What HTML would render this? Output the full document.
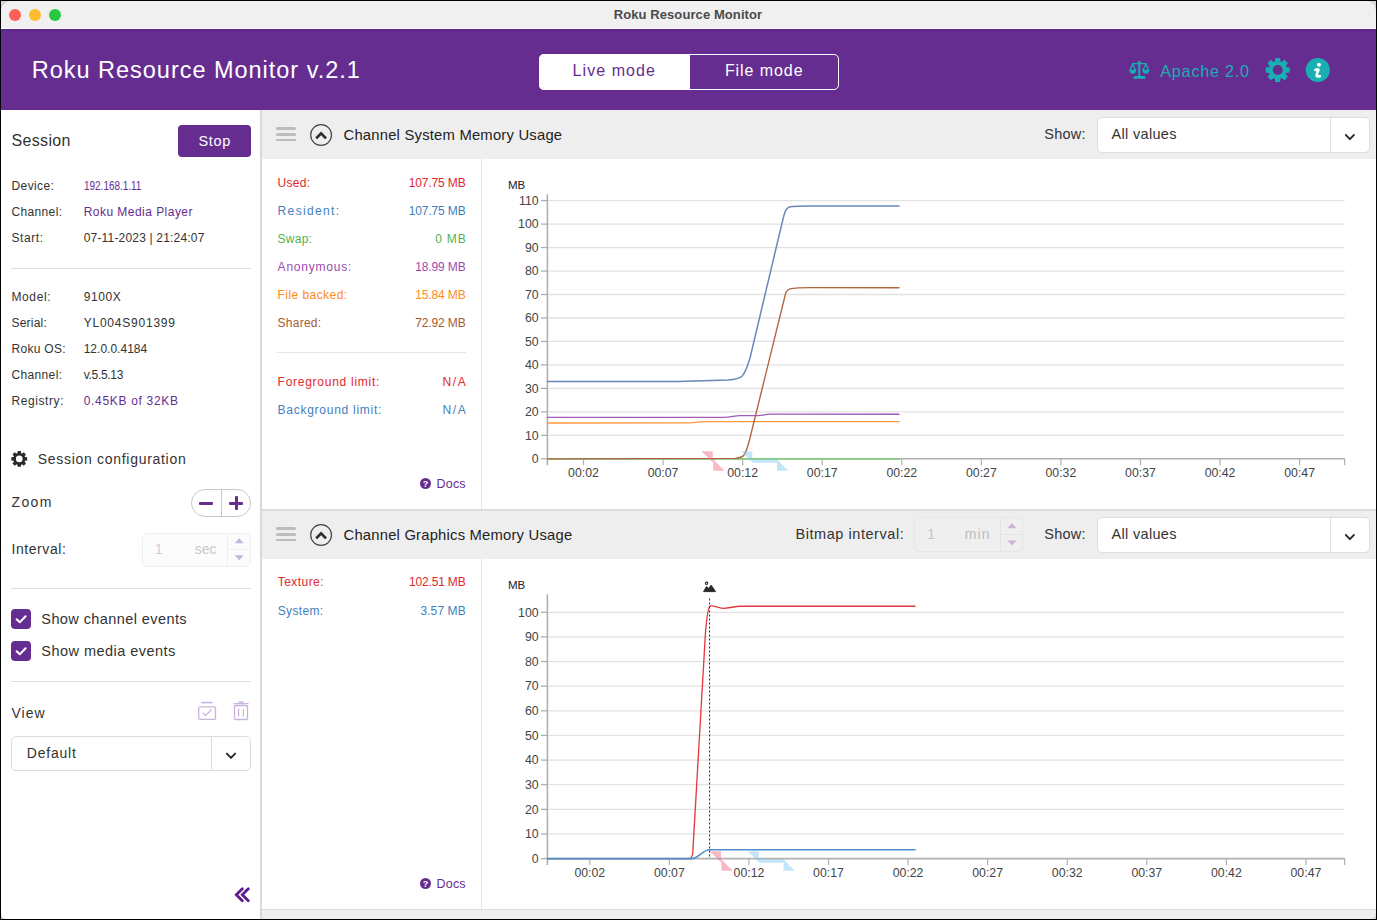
<!DOCTYPE html>
<html><head><meta charset="utf-8">
<style>
*{box-sizing:border-box;margin:0;padding:0}
html,body{width:1377px;height:920px;overflow:hidden;background:#fff;font-family:"Liberation Sans",sans-serif}
.tx{position:absolute;white-space:nowrap;line-height:1;font-family:"Liberation Sans",sans-serif}
.bx{position:absolute}
.ov{position:absolute;left:0;top:0}
</style></head><body>
<div class="bx" style="left:0px;top:0px;width:1377px;height:28px;background:#f0f0f0"></div>
<div class="bx" style="left:0px;top:28px;width:1377px;height:1px;background:#fafafa"></div>
<div class="bx" style="left:9px;top:9px;width:12px;height:12px;background:#fe5f57;border-radius:50%"></div>
<div class="bx" style="left:29px;top:9px;width:12px;height:12px;background:#febc2e;border-radius:50%"></div>
<div class="bx" style="left:49px;top:9px;width:12px;height:12px;background:#28c840;border-radius:50%"></div>
<div class="tx" style="left:613.70px;top:8.20px;font-size:13px;color:#4a4a4a;letter-spacing:0.089px;font-weight:bold;">Roku Resource Monitor</div>
<div class="bx" style="left:0px;top:29px;width:1377px;height:81px;background:#662d91"></div>
<div class="bx" style="left:0px;top:29.5px;width:1377px;height:1.2px;background:#5c2388"></div>
<div class="tx" style="left:31.80px;top:58.91px;font-size:23.5px;color:#ffffff;letter-spacing:0.977px;">Roku Resource Monitor v.2.1</div>
<div class="bx" style="left:538.5px;top:53.5px;width:300.5px;height:36.5px;background:transparent;border:1.5px solid #fff;border-radius:5px"></div>
<div class="bx" style="left:538.5px;top:53.5px;width:151.5px;height:36.5px;background:#fff;border-radius:5px 0 0 5px"></div>
<div class="tx" style="left:572.60px;top:62.86px;font-size:16px;color:#662d91;letter-spacing:1.060px;">Live mode</div>
<div class="tx" style="left:724.90px;top:62.86px;font-size:16px;color:#ffffff;letter-spacing:0.931px;">File mode</div>
<div class="tx" style="left:1160.30px;top:62.69px;font-size:16.2px;color:#18afb3;letter-spacing:0.759px;">Apache 2.0</div>
<div class="bx" style="left:0px;top:110px;width:260px;height:810px;background:#fff"></div>
<div class="bx" style="left:260px;top:110px;width:2px;height:810px;background:#d9d9d9"></div>
<div class="tx" style="left:11.50px;top:132.96px;font-size:16px;color:#333333;letter-spacing:0.346px;">Session</div>
<div class="bx" style="left:178px;top:125px;width:73px;height:32px;background:#662d91;border-radius:4px"></div>
<div class="tx" style="left:198.40px;top:133.53px;font-size:14.5px;color:#fff;letter-spacing:0.724px;">Stop</div>
<div class="tx" style="left:11.50px;top:179.74px;font-size:12px;color:#333333;letter-spacing:0.398px;">Device:</div>
<div class="tx" style="left:83.70px;top:179.74px;font-size:12px;color:#662d91;transform:scaleX(0.8298);transform-origin:0 0;">192.168.1.11</div>
<div class="tx" style="left:11.50px;top:205.74px;font-size:12px;color:#333333;letter-spacing:0.352px;">Channel:</div>
<div class="tx" style="left:83.70px;top:205.74px;font-size:12px;color:#662d91;letter-spacing:0.464px;">Roku Media Player</div>
<div class="tx" style="left:11.50px;top:231.74px;font-size:12px;color:#333333;letter-spacing:0.565px;">Start:</div>
<div class="tx" style="left:83.70px;top:231.74px;font-size:12px;color:#333333;letter-spacing:0.185px;">07-11-2023 | 21:24:07</div>
<div class="bx" style="left:11px;top:267.5px;width:240px;height:1.2px;background:#dedede"></div>
<div class="tx" style="left:11.50px;top:290.84px;font-size:12px;color:#333333;letter-spacing:0.596px;">Model:</div>
<div class="tx" style="left:83.70px;top:290.84px;font-size:12px;color:#333333;letter-spacing:0.575px;">9100X</div>
<div class="tx" style="left:11.50px;top:316.79px;font-size:12px;color:#333333;letter-spacing:0.214px;">Serial:</div>
<div class="tx" style="left:83.70px;top:316.79px;font-size:12px;color:#333333;letter-spacing:0.777px;">YL004S901399</div>
<div class="tx" style="left:11.50px;top:342.74px;font-size:12px;color:#333333;letter-spacing:0.283px;">Roku OS:</div>
<div class="tx" style="left:83.70px;top:342.74px;font-size:12px;color:#333333;letter-spacing:0.011px;">12.0.0.4184</div>
<div class="tx" style="left:11.50px;top:368.69px;font-size:12px;color:#333333;letter-spacing:0.352px;">Channel:</div>
<div class="tx" style="left:83.70px;top:368.69px;font-size:12px;color:#333333;letter-spacing:-0.301px;">v.5.5.13</div>
<div class="tx" style="left:11.50px;top:394.64px;font-size:12px;color:#333333;letter-spacing:0.582px;">Registry:</div>
<div class="tx" style="left:83.70px;top:394.64px;font-size:12px;color:#662d91;letter-spacing:0.685px;">0.45KB of 32KB</div>
<div class="tx" style="left:37.70px;top:452.15px;font-size:14px;color:#333333;letter-spacing:0.707px;">Session configuration</div>
<div class="tx" style="left:11.50px;top:495.35px;font-size:14px;color:#333333;letter-spacing:1.337px;">Zoom</div>
<div class="bx" style="left:191px;top:489px;width:60px;height:27.5px;border:1px solid #c8c8c8;border-radius:14px;background:#fff"></div>
<div class="bx" style="left:220.5px;top:489.5px;width:1.3px;height:26.5px;background:#c8c8c8"></div>
<div class="bx" style="left:199.3px;top:501.5px;width:13.6px;height:3px;background:#662d91;border-radius:1px"></div>
<div class="bx" style="left:229.2px;top:501.5px;width:13.6px;height:3px;background:#662d91;border-radius:1px"></div>
<div class="bx" style="left:234.5px;top:496.3px;width:3px;height:13.6px;background:#662d91;border-radius:1px"></div>
<div class="tx" style="left:11.50px;top:542.15px;font-size:14px;color:#333333;letter-spacing:0.562px;">Interval:</div>
<div class="bx" style="left:142px;top:532.6px;width:108.5px;height:34.5px;border:1px solid #efefef;border-radius:5px;background:#fcfcfc"></div>
<div class="bx" style="left:227px;top:533px;width:1px;height:33.5px;background:#efefef"></div>
<div class="bx" style="left:227.5px;top:549.3px;width:22.5px;height:1px;background:#efefef"></div>
<div class="tx" style="left:154.80px;top:542.15px;font-size:14px;color:#cfcfcf;">1</div>
<div class="tx" style="left:194.70px;top:542.15px;font-size:14px;color:#c8c8c8;letter-spacing:0.007px;">sec</div>
<div class="bx" style="left:0px;top:0px;width:0px;height:0px;"></div>
<div class="bx" style="left:11px;top:588px;width:240px;height:1.2px;background:#dedede"></div>
<div class="bx" style="left:11.4px;top:609px;width:20px;height:20px;background:#662d91;border-radius:4px"></div>
<div class="tx" style="left:41.30px;top:612.13px;font-size:14.5px;color:#333333;letter-spacing:0.414px;">Show channel events</div>
<div class="bx" style="left:11.4px;top:641px;width:20px;height:20px;background:#662d91;border-radius:4px"></div>
<div class="tx" style="left:41.30px;top:644.13px;font-size:14.5px;color:#333333;letter-spacing:0.466px;">Show media events</div>
<div class="bx" style="left:11px;top:680.7px;width:240px;height:1.2px;background:#dedede"></div>
<div class="tx" style="left:11.50px;top:706.25px;font-size:14px;color:#333333;letter-spacing:0.969px;">View</div>
<div class="bx" style="left:11.4px;top:736.3px;width:239.2px;height:35px;border:1px solid #dcdcdc;border-radius:5px;background:#fff"></div>
<div class="bx" style="left:211px;top:736.8px;width:1px;height:34px;background:#dcdcdc"></div>
<div class="tx" style="left:26.80px;top:746.35px;font-size:14px;color:#333333;letter-spacing:0.773px;">Default</div>
<div class="bx" style="left:262px;top:110px;width:1115px;height:810px;background:#fff"></div>
<div class="bx" style="left:262px;top:110px;width:1115px;height:48.5px;background:#eeeeee"></div>
<div class="bx" style="left:262px;top:509px;width:1115px;height:1.5px;background:#dcdcdc"></div>
<div class="bx" style="left:262px;top:510.5px;width:1115px;height:48px;background:#eeeeee"></div>
<div class="bx" style="left:262px;top:908.5px;width:1115px;height:1.5px;background:#dcdcdc"></div>
<div class="bx" style="left:262px;top:910px;width:1115px;height:10px;background:#eeeeee"></div>
<div class="bx" style="left:481px;top:158.5px;width:1px;height:350.5px;background:#e3e3e3"></div>
<div class="bx" style="left:481px;top:558.5px;width:1px;height:350px;background:#e3e3e3"></div>
<div class="bx" style="left:276.2px;top:127.1px;width:20px;height:2.8px;background:#bdbdbd;border-radius:1.5px"></div>
<div class="bx" style="left:276.2px;top:132.79999999999998px;width:20px;height:2.8px;background:#bdbdbd;border-radius:1.5px"></div>
<div class="bx" style="left:276.2px;top:138.5px;width:20px;height:2.8px;background:#bdbdbd;border-radius:1.5px"></div>
<div class="bx" style="left:276.2px;top:527.1px;width:20px;height:2.8px;background:#bdbdbd;border-radius:1.5px"></div>
<div class="bx" style="left:276.2px;top:532.8px;width:20px;height:2.8px;background:#bdbdbd;border-radius:1.5px"></div>
<div class="bx" style="left:276.2px;top:538.5px;width:20px;height:2.8px;background:#bdbdbd;border-radius:1.5px"></div>
<div class="tx" style="left:343.50px;top:128.07px;font-size:14.8px;color:#222;letter-spacing:0.214px;">Channel System Memory Usage</div>
<div class="tx" style="left:343.50px;top:527.77px;font-size:14.8px;color:#222;letter-spacing:0.206px;">Channel Graphics Memory Usage</div>
<div class="tx" style="left:1044.30px;top:127.03px;font-size:14.5px;color:#333333;letter-spacing:0.225px;">Show:</div>
<div class="bx" style="left:1096.5px;top:117px;width:273.5px;height:35.5px;border:1px solid #dedede;border-radius:5px;background:#fff"></div>
<div class="bx" style="left:1330px;top:117.5px;width:1px;height:34.5px;background:#dedede"></div>
<div class="tx" style="left:1111.60px;top:127.03px;font-size:14.5px;color:#333333;letter-spacing:0.316px;">All values</div>
<div class="tx" style="left:1044.30px;top:527.03px;font-size:14.5px;color:#333333;letter-spacing:0.225px;">Show:</div>
<div class="bx" style="left:1096.5px;top:517px;width:273.5px;height:35.5px;border:1px solid #dedede;border-radius:5px;background:#fff"></div>
<div class="bx" style="left:1330px;top:517.5px;width:1px;height:34.5px;background:#dedede"></div>
<div class="tx" style="left:1111.60px;top:527.03px;font-size:14.5px;color:#333333;letter-spacing:0.316px;">All values</div>
<div class="tx" style="left:795.50px;top:526.73px;font-size:14.5px;color:#333333;letter-spacing:0.551px;">Bitmap interval:</div>
<div class="bx" style="left:914.4px;top:517.3px;width:108.8px;height:35px;border:1px solid #e6e6e6;border-radius:5px;background:#efefef"></div>
<div class="bx" style="left:1000.3px;top:517.8px;width:1px;height:34px;background:#e4e4e4"></div>
<div class="bx" style="left:1000.8px;top:534.2px;width:22px;height:1px;background:#e4e4e4"></div>
<div class="tx" style="left:927.30px;top:527.15px;font-size:14px;color:#c4c4c4;">1</div>
<div class="tx" style="left:964.70px;top:527.15px;font-size:14px;color:#bdbdbd;letter-spacing:1.170px;">min</div>
<div class="tx" style="left:277.60px;top:176.84px;font-size:12px;color:#e2272d;letter-spacing:0.263px;">Used:</div>
<div class="tx" style="left:408.80px;top:176.84px;font-size:12px;color:#e2272d;letter-spacing:-0.142px;">107.75 MB</div>
<div class="tx" style="left:277.60px;top:204.89px;font-size:12px;color:#3f80c0;letter-spacing:1.350px;">Resident:</div>
<div class="tx" style="left:408.80px;top:204.89px;font-size:12px;color:#3f80c0;letter-spacing:-0.142px;">107.75 MB</div>
<div class="tx" style="left:277.60px;top:232.94px;font-size:12px;color:#55b04f;letter-spacing:0.237px;">Swap:</div>
<div class="tx" style="left:435.20px;top:232.94px;font-size:12px;color:#55b04f;letter-spacing:0.830px;">0 MB</div>
<div class="tx" style="left:277.60px;top:260.99px;font-size:12px;color:#9b4cb3;letter-spacing:0.788px;">Anonymous:</div>
<div class="tx" style="left:415.20px;top:260.99px;font-size:12px;color:#9b4cb3;letter-spacing:-0.124px;">18.99 MB</div>
<div class="tx" style="left:277.60px;top:289.04px;font-size:12px;color:#ff8a1e;letter-spacing:0.436px;">File backed:</div>
<div class="tx" style="left:415.20px;top:289.04px;font-size:12px;color:#ff8a1e;letter-spacing:-0.124px;">15.84 MB</div>
<div class="tx" style="left:277.60px;top:317.09px;font-size:12px;color:#a75a33;letter-spacing:0.245px;">Shared:</div>
<div class="tx" style="left:415.20px;top:317.09px;font-size:12px;color:#a75a33;letter-spacing:-0.124px;">72.92 MB</div>
<div class="bx" style="left:277px;top:351.8px;width:189px;height:1.2px;background:#e6e6e6"></div>
<div class="tx" style="left:277.60px;top:375.84px;font-size:12px;color:#e2272d;letter-spacing:0.735px;">Foreground limit:</div>
<div class="tx" style="left:442.40px;top:375.84px;font-size:12px;color:#e2272d;letter-spacing:1.648px;">N/A</div>
<div class="tx" style="left:277.60px;top:403.84px;font-size:12px;color:#3f80c0;letter-spacing:0.735px;">Background limit:</div>
<div class="tx" style="left:442.40px;top:403.84px;font-size:12px;color:#3f80c0;letter-spacing:1.648px;">N/A</div>
<div class="tx" style="left:277.70px;top:576.34px;font-size:12px;color:#e2272d;letter-spacing:0.459px;">Texture:</div>
<div class="tx" style="left:408.90px;top:576.34px;font-size:12px;color:#e2272d;letter-spacing:-0.155px;">102.51 MB</div>
<div class="tx" style="left:277.70px;top:604.54px;font-size:12px;color:#3f80c0;letter-spacing:0.360px;">System:</div>
<div class="tx" style="left:420.40px;top:604.54px;font-size:12px;color:#3f80c0;letter-spacing:0.102px;">3.57 MB</div>
<div class="bx" style="left:420px;top:477.5px;width:11px;height:11px;background:#662d91;border-radius:50%"></div>
<div class="tx" style="left:436.50px;top:478.32px;font-size:12.5px;color:#662d91;letter-spacing:0.207px;">Docs</div>
<div class="bx" style="left:420px;top:877.5px;width:11px;height:11px;background:#662d91;border-radius:50%"></div>
<div class="tx" style="left:436.50px;top:878.32px;font-size:12.5px;color:#662d91;letter-spacing:0.207px;">Docs</div>
<svg class="ov" width="1377" height="920" viewBox="0 0 1377 920" font-family="Liberation Sans, sans-serif"><line x1="540.9" y1="458.80" x2="547.4" y2="458.80" stroke="#aaaaaa" stroke-width="1.2"/><text x="538.6" y="463.10" text-anchor="end" font-size="12.3" fill="#444">0</text><line x1="547.4" y1="435.33" x2="1344.7" y2="435.33" stroke="#e2e2e2" stroke-width="1.3"/><line x1="540.9" y1="435.33" x2="547.4" y2="435.33" stroke="#aaaaaa" stroke-width="1.2"/><text x="538.6" y="439.63" text-anchor="end" font-size="12.3" fill="#444">10</text><line x1="547.4" y1="411.86" x2="1344.7" y2="411.86" stroke="#e2e2e2" stroke-width="1.3"/><line x1="540.9" y1="411.86" x2="547.4" y2="411.86" stroke="#aaaaaa" stroke-width="1.2"/><text x="538.6" y="416.16" text-anchor="end" font-size="12.3" fill="#444">20</text><line x1="547.4" y1="388.39" x2="1344.7" y2="388.39" stroke="#e2e2e2" stroke-width="1.3"/><line x1="540.9" y1="388.39" x2="547.4" y2="388.39" stroke="#aaaaaa" stroke-width="1.2"/><text x="538.6" y="392.69" text-anchor="end" font-size="12.3" fill="#444">30</text><line x1="547.4" y1="364.92" x2="1344.7" y2="364.92" stroke="#e2e2e2" stroke-width="1.3"/><line x1="540.9" y1="364.92" x2="547.4" y2="364.92" stroke="#aaaaaa" stroke-width="1.2"/><text x="538.6" y="369.22" text-anchor="end" font-size="12.3" fill="#444">40</text><line x1="547.4" y1="341.45" x2="1344.7" y2="341.45" stroke="#e2e2e2" stroke-width="1.3"/><line x1="540.9" y1="341.45" x2="547.4" y2="341.45" stroke="#aaaaaa" stroke-width="1.2"/><text x="538.6" y="345.75" text-anchor="end" font-size="12.3" fill="#444">50</text><line x1="547.4" y1="317.98" x2="1344.7" y2="317.98" stroke="#e2e2e2" stroke-width="1.3"/><line x1="540.9" y1="317.98" x2="547.4" y2="317.98" stroke="#aaaaaa" stroke-width="1.2"/><text x="538.6" y="322.28" text-anchor="end" font-size="12.3" fill="#444">60</text><line x1="547.4" y1="294.51" x2="1344.7" y2="294.51" stroke="#e2e2e2" stroke-width="1.3"/><line x1="540.9" y1="294.51" x2="547.4" y2="294.51" stroke="#aaaaaa" stroke-width="1.2"/><text x="538.6" y="298.81" text-anchor="end" font-size="12.3" fill="#444">70</text><line x1="547.4" y1="271.04" x2="1344.7" y2="271.04" stroke="#e2e2e2" stroke-width="1.3"/><line x1="540.9" y1="271.04" x2="547.4" y2="271.04" stroke="#aaaaaa" stroke-width="1.2"/><text x="538.6" y="275.34" text-anchor="end" font-size="12.3" fill="#444">80</text><line x1="547.4" y1="247.57" x2="1344.7" y2="247.57" stroke="#e2e2e2" stroke-width="1.3"/><line x1="540.9" y1="247.57" x2="547.4" y2="247.57" stroke="#aaaaaa" stroke-width="1.2"/><text x="538.6" y="251.87" text-anchor="end" font-size="12.3" fill="#444">90</text><line x1="547.4" y1="224.10" x2="1344.7" y2="224.10" stroke="#e2e2e2" stroke-width="1.3"/><line x1="540.9" y1="224.10" x2="547.4" y2="224.10" stroke="#aaaaaa" stroke-width="1.2"/><text x="538.6" y="228.40" text-anchor="end" font-size="12.3" fill="#444">100</text><line x1="547.4" y1="200.63" x2="1344.7" y2="200.63" stroke="#e2e2e2" stroke-width="1.3"/><line x1="540.9" y1="200.63" x2="547.4" y2="200.63" stroke="#aaaaaa" stroke-width="1.2"/><text x="538.6" y="204.93" text-anchor="end" font-size="12.3" fill="#444">110</text><line x1="547.4" y1="194.3" x2="547.4" y2="465.3" stroke="#b0b0b0" stroke-width="1.6"/><line x1="547.4" y1="458.8" x2="1344.7" y2="458.8" stroke="#b0b0b0" stroke-width="1.6"/><line x1="1344.7" y1="458.8" x2="1344.7" y2="465.3" stroke="#b0b0b0" stroke-width="1.2"/><line x1="583.50" y1="458.8" x2="583.50" y2="465.3" stroke="#b0b0b0" stroke-width="1.2"/><text x="583.50" y="476.8" text-anchor="middle" font-size="12.3" fill="#444">00:02</text><line x1="663.07" y1="458.8" x2="663.07" y2="465.3" stroke="#b0b0b0" stroke-width="1.2"/><text x="663.07" y="476.8" text-anchor="middle" font-size="12.3" fill="#444">00:07</text><line x1="742.64" y1="458.8" x2="742.64" y2="465.3" stroke="#b0b0b0" stroke-width="1.2"/><text x="742.64" y="476.8" text-anchor="middle" font-size="12.3" fill="#444">00:12</text><line x1="822.21" y1="458.8" x2="822.21" y2="465.3" stroke="#b0b0b0" stroke-width="1.2"/><text x="822.21" y="476.8" text-anchor="middle" font-size="12.3" fill="#444">00:17</text><line x1="901.78" y1="458.8" x2="901.78" y2="465.3" stroke="#b0b0b0" stroke-width="1.2"/><text x="901.78" y="476.8" text-anchor="middle" font-size="12.3" fill="#444">00:22</text><line x1="981.35" y1="458.8" x2="981.35" y2="465.3" stroke="#b0b0b0" stroke-width="1.2"/><text x="981.35" y="476.8" text-anchor="middle" font-size="12.3" fill="#444">00:27</text><line x1="1060.92" y1="458.8" x2="1060.92" y2="465.3" stroke="#b0b0b0" stroke-width="1.2"/><text x="1060.92" y="476.8" text-anchor="middle" font-size="12.3" fill="#444">00:32</text><line x1="1140.49" y1="458.8" x2="1140.49" y2="465.3" stroke="#b0b0b0" stroke-width="1.2"/><text x="1140.49" y="476.8" text-anchor="middle" font-size="12.3" fill="#444">00:37</text><line x1="1220.06" y1="458.8" x2="1220.06" y2="465.3" stroke="#b0b0b0" stroke-width="1.2"/><text x="1220.06" y="476.8" text-anchor="middle" font-size="12.3" fill="#444">00:42</text><line x1="1299.63" y1="458.8" x2="1299.63" y2="465.3" stroke="#b0b0b0" stroke-width="1.2"/><text x="1299.63" y="476.8" text-anchor="middle" font-size="12.3" fill="#444">00:47</text><text x="508" y="188.9" font-size="11.5" fill="#222">MB</text><line x1="540.9" y1="858.60" x2="547.4" y2="858.60" stroke="#aaaaaa" stroke-width="1.2"/><text x="538.6" y="862.90" text-anchor="end" font-size="12.3" fill="#444">0</text><line x1="547.4" y1="833.97" x2="1344.7" y2="833.97" stroke="#e2e2e2" stroke-width="1.3"/><line x1="540.9" y1="833.97" x2="547.4" y2="833.97" stroke="#aaaaaa" stroke-width="1.2"/><text x="538.6" y="838.27" text-anchor="end" font-size="12.3" fill="#444">10</text><line x1="547.4" y1="809.34" x2="1344.7" y2="809.34" stroke="#e2e2e2" stroke-width="1.3"/><line x1="540.9" y1="809.34" x2="547.4" y2="809.34" stroke="#aaaaaa" stroke-width="1.2"/><text x="538.6" y="813.64" text-anchor="end" font-size="12.3" fill="#444">20</text><line x1="547.4" y1="784.71" x2="1344.7" y2="784.71" stroke="#e2e2e2" stroke-width="1.3"/><line x1="540.9" y1="784.71" x2="547.4" y2="784.71" stroke="#aaaaaa" stroke-width="1.2"/><text x="538.6" y="789.01" text-anchor="end" font-size="12.3" fill="#444">30</text><line x1="547.4" y1="760.08" x2="1344.7" y2="760.08" stroke="#e2e2e2" stroke-width="1.3"/><line x1="540.9" y1="760.08" x2="547.4" y2="760.08" stroke="#aaaaaa" stroke-width="1.2"/><text x="538.6" y="764.38" text-anchor="end" font-size="12.3" fill="#444">40</text><line x1="547.4" y1="735.45" x2="1344.7" y2="735.45" stroke="#e2e2e2" stroke-width="1.3"/><line x1="540.9" y1="735.45" x2="547.4" y2="735.45" stroke="#aaaaaa" stroke-width="1.2"/><text x="538.6" y="739.75" text-anchor="end" font-size="12.3" fill="#444">50</text><line x1="547.4" y1="710.82" x2="1344.7" y2="710.82" stroke="#e2e2e2" stroke-width="1.3"/><line x1="540.9" y1="710.82" x2="547.4" y2="710.82" stroke="#aaaaaa" stroke-width="1.2"/><text x="538.6" y="715.12" text-anchor="end" font-size="12.3" fill="#444">60</text><line x1="547.4" y1="686.19" x2="1344.7" y2="686.19" stroke="#e2e2e2" stroke-width="1.3"/><line x1="540.9" y1="686.19" x2="547.4" y2="686.19" stroke="#aaaaaa" stroke-width="1.2"/><text x="538.6" y="690.49" text-anchor="end" font-size="12.3" fill="#444">70</text><line x1="547.4" y1="661.56" x2="1344.7" y2="661.56" stroke="#e2e2e2" stroke-width="1.3"/><line x1="540.9" y1="661.56" x2="547.4" y2="661.56" stroke="#aaaaaa" stroke-width="1.2"/><text x="538.6" y="665.86" text-anchor="end" font-size="12.3" fill="#444">80</text><line x1="547.4" y1="636.93" x2="1344.7" y2="636.93" stroke="#e2e2e2" stroke-width="1.3"/><line x1="540.9" y1="636.93" x2="547.4" y2="636.93" stroke="#aaaaaa" stroke-width="1.2"/><text x="538.6" y="641.23" text-anchor="end" font-size="12.3" fill="#444">90</text><line x1="547.4" y1="612.30" x2="1344.7" y2="612.30" stroke="#e2e2e2" stroke-width="1.3"/><line x1="540.9" y1="612.30" x2="547.4" y2="612.30" stroke="#aaaaaa" stroke-width="1.2"/><text x="538.6" y="616.60" text-anchor="end" font-size="12.3" fill="#444">100</text><line x1="547.4" y1="594.3" x2="547.4" y2="865.1" stroke="#b0b0b0" stroke-width="1.6"/><line x1="547.4" y1="858.6" x2="1344.7" y2="858.6" stroke="#b0b0b0" stroke-width="1.6"/><line x1="1344.7" y1="858.6" x2="1344.7" y2="865.1" stroke="#b0b0b0" stroke-width="1.2"/><line x1="589.80" y1="858.6" x2="589.80" y2="865.1" stroke="#b0b0b0" stroke-width="1.2"/><text x="589.80" y="876.8" text-anchor="middle" font-size="12.3" fill="#444">00:02</text><line x1="669.37" y1="858.6" x2="669.37" y2="865.1" stroke="#b0b0b0" stroke-width="1.2"/><text x="669.37" y="876.8" text-anchor="middle" font-size="12.3" fill="#444">00:07</text><line x1="748.94" y1="858.6" x2="748.94" y2="865.1" stroke="#b0b0b0" stroke-width="1.2"/><text x="748.94" y="876.8" text-anchor="middle" font-size="12.3" fill="#444">00:12</text><line x1="828.51" y1="858.6" x2="828.51" y2="865.1" stroke="#b0b0b0" stroke-width="1.2"/><text x="828.51" y="876.8" text-anchor="middle" font-size="12.3" fill="#444">00:17</text><line x1="908.08" y1="858.6" x2="908.08" y2="865.1" stroke="#b0b0b0" stroke-width="1.2"/><text x="908.08" y="876.8" text-anchor="middle" font-size="12.3" fill="#444">00:22</text><line x1="987.65" y1="858.6" x2="987.65" y2="865.1" stroke="#b0b0b0" stroke-width="1.2"/><text x="987.65" y="876.8" text-anchor="middle" font-size="12.3" fill="#444">00:27</text><line x1="1067.22" y1="858.6" x2="1067.22" y2="865.1" stroke="#b0b0b0" stroke-width="1.2"/><text x="1067.22" y="876.8" text-anchor="middle" font-size="12.3" fill="#444">00:32</text><line x1="1146.79" y1="858.6" x2="1146.79" y2="865.1" stroke="#b0b0b0" stroke-width="1.2"/><text x="1146.79" y="876.8" text-anchor="middle" font-size="12.3" fill="#444">00:37</text><line x1="1226.36" y1="858.6" x2="1226.36" y2="865.1" stroke="#b0b0b0" stroke-width="1.2"/><text x="1226.36" y="876.8" text-anchor="middle" font-size="12.3" fill="#444">00:42</text><line x1="1305.93" y1="858.6" x2="1305.93" y2="865.1" stroke="#b0b0b0" stroke-width="1.2"/><text x="1305.93" y="876.8" text-anchor="middle" font-size="12.3" fill="#444">00:47</text><text x="508" y="588.9" font-size="11.5" fill="#222">MB</text><g fill="none" stroke-width="1.35" stroke-linejoin="round" stroke-linecap="round"><path stroke="#86ca86" stroke-width="1.8" d="M547.4,458.8 H899"/><path stroke="#ff9640" d="M547.4,423 L686,422.9 C694,422.8 698,421.8 706,421.7 L899,421.6"/><path stroke="#a05cb6" d="M547.4,417.4 L724,417.4 C730,417.4 735,415.6 740,415.6 L758,415.6 C763,415.6 765,414.3 770,414.2 L899,414.2"/><path stroke="#b0653f" d="M547.4,458.8 L735,458.4 C740,458 742,457.5 744,455 C746,452 747.5,448 749.5,440 L784,300 C785.5,293 786.5,289.5 790,288.8 C795,288 800,287.8 810,287.7 L899,287.7"/><path stroke="#e2272d" stroke-width="0" d="M547.4,381.4 L677,381.4 C700,381 715,380.5 728,380 C735,379.5 740,378 742,376.2 C745,373 747,368 750,358 L783,219 C785,211 786,208 790,206.8 C795,206 800,205.9 810,205.9 L899,205.9"/><path stroke="#6a88bb" stroke-width="1.5" d="M547.4,381.4 L677,381.4 C700,381 715,380.5 728,380 C735,379.5 740,378 742,376.2 C745,373 747,368 750,358 L783,219 C785,211 786,208 790,206.8 C795,206 800,205.9 810,205.9 L899,205.9"/></g><g fill="none" stroke-width="1.35" stroke-linejoin="round" stroke-linecap="round"><path stroke="#e53a40" d="M547.4,858.6 L690.5,858.6 C691.5,858 692,856 692.7,853.9 L705.5,632 C707,615 708,607 710,606 C714,605 718,608.3 723,608.3 C730,608.3 734,606.2 741,606.2 L915,606.2"/><path stroke="#4f8fcc" stroke-width="1.6" d="M547.4,858.6 L692,858.6 C698,858.6 703,849.8 709.6,849.8 L915,849.8"/></g><polygon fill="#f06482" fill-opacity="0.45" points="701.2,451.2 712.8000000000001,451.2 712.8000000000001,459.0 724.7,470.7 713.2,470.7 713.2,462.5"/><polygon fill="#7cc6ee" fill-opacity="0.45" points="741.1,451.2 752.3000000000001,451.2 752.3000000000001,459.2 777.0,459.2 788.2,470.7 777.0,470.7 777.0,462.8 752.7,462.8"/><polygon fill="#f06482" fill-opacity="0.45" points="709.4,851.2 721.0,851.2 721.0,859.0 732.9,870.7 721.4,870.7 721.4,862.5"/><polygon fill="#7cc6ee" fill-opacity="0.45" points="747.6,851.2 758.8000000000001,851.2 758.8000000000001,859.2 783.5,859.2 794.7,870.7 783.5,870.7 783.5,862.8000000000001 759.2,862.8000000000001"/><line x1="709.6" y1="598.5" x2="709.6" y2="858.6" stroke="#222" stroke-width="1" stroke-dasharray="2,2"/><path fill="#2a2a2a" stroke="#2a2a2a" stroke-width="1" stroke-linejoin="round" d="M703.6,591.6 L706.5,586.6 L708.4,588.4 L711.2,585.2 L715.5,591.6 Z"/><circle cx="706.6" cy="583.3" r="1.2" fill="none" stroke="#2a2a2a" stroke-width="1.1"/></svg>
<svg class="ov" width="1377" height="920" viewBox="0 0 1377 920" font-family="Liberation Sans, sans-serif"><path fill="#2b2b2b" d="M24.76,456.99 L27.19,457.32 L27.19,460.48 L24.76,460.81 L24.50,461.45 L25.98,463.40 L23.75,465.63 L21.80,464.15 L21.16,464.41 L20.83,466.84 L17.67,466.84 L17.34,464.41 L16.70,464.15 L14.75,465.63 L12.52,463.40 L14.00,461.45 L13.74,460.81 L11.31,460.48 L11.31,457.32 L13.74,456.99 L14.00,456.35 L12.52,454.40 L14.75,452.17 L16.70,453.65 L17.34,453.39 L17.67,450.96 L20.83,450.96 L21.16,453.39 L21.80,453.65 L23.75,452.17 L25.98,454.40 L24.50,456.35 Z"/><circle cx="19.25" cy="458.9" r="5.832" fill="#2b2b2b"/><circle cx="19.25" cy="458.9" r="3.3209999999999997" fill="#fff"/><path fill="#18afb3" d="M1286.03,67.11 L1289.71,67.61 L1289.71,72.39 L1286.03,72.89 L1285.64,73.85 L1287.89,76.81 L1284.51,80.19 L1281.55,77.94 L1280.59,78.33 L1280.09,82.01 L1275.31,82.01 L1274.81,78.33 L1273.85,77.94 L1270.89,80.19 L1267.51,76.81 L1269.76,73.85 L1269.37,72.89 L1265.69,72.39 L1265.69,67.61 L1269.37,67.11 L1269.76,66.15 L1267.51,63.19 L1270.89,59.81 L1273.85,62.06 L1274.81,61.67 L1275.31,57.99 L1280.09,57.99 L1280.59,61.67 L1281.55,62.06 L1284.51,59.81 L1287.89,63.19 L1285.64,66.15 Z"/><circle cx="1277.7" cy="70" r="8.82" fill="#18afb3"/><circle cx="1277.7" cy="70" r="5.0225" fill="#662d91"/><circle cx="1317.8" cy="70" r="12" fill="#18afb3"/><circle cx="1319" cy="64.8" r="2" fill="#fff"/><path d="M1315.4,70 Q1317.3,68.7 1318.5,69.6 L1316.6,75.2 Q1316.2,76.9 1319.9,76.2" fill="none" stroke="#fff" stroke-width="2.6" stroke-linecap="round" stroke-linejoin="round"/><g fill="#18afb3"><rect x="1138.3" y="62" width="2" height="14.5"/><circle cx="1139.3" cy="62.2" r="1.3"/><polygon points="1134.4,75.9 1144.9,75.9 1145.8,78.8 1133.1,78.8"/><path d="M1129.4,69.7 h6.7 a3.35,3.9 0 0 1 -6.7,0 z"/><path d="M1142.4,69.7 h6.9 a3.45,3.9 0 0 1 -6.9,0 z"/></g><g fill="none" stroke="#18afb3" stroke-width="1.3" stroke-linecap="round"><path d="M1132.7,63.6 H1146"/><path d="M1132.7,64.2 L1130,69.9 M1132.7,64.2 L1135.5,69.9 M1146,64.2 L1143,69.9 M1146,64.2 L1148.7,69.9"/></g><circle cx="321.1" cy="135" r="10.4" fill="none" stroke="#444" stroke-width="1.2"/><path d="M317.1,137.4 L321.1,133.4 L325.1,137.4" fill="none" stroke="#2a2a2a" stroke-width="2.6" stroke-linecap="square"/><circle cx="321.1" cy="535" r="10.4" fill="none" stroke="#444" stroke-width="1.2"/><path d="M317.1,537.4 L321.1,533.4 L325.1,537.4" fill="none" stroke="#2a2a2a" stroke-width="2.6" stroke-linecap="square"/><path d="M1345.8,134.9 L1349.9,139.2 L1354.0,134.9" fill="none" stroke="#2a2a2a" stroke-width="1.9" stroke-linecap="round" stroke-linejoin="round"/><path d="M1345.8,534.9 L1349.9,539.2 L1354.0,534.9" fill="none" stroke="#2a2a2a" stroke-width="1.9" stroke-linecap="round" stroke-linejoin="round"/><path d="M226.9,753.6 L231.0,757.9 L235.1,753.6" fill="none" stroke="#2a2a2a" stroke-width="1.9" stroke-linecap="round" stroke-linejoin="round"/><path d="M16.6,619.3 L19.8,622.2 L25.6,616.2" fill="none" stroke="#fff" stroke-width="2" stroke-linecap="round" stroke-linejoin="round"/><path d="M16.6,651.3 L19.8,654.2 L25.6,648.2" fill="none" stroke="#fff" stroke-width="2" stroke-linecap="round" stroke-linejoin="round"/><path d="M234.7,543.3 L239.2,538.3 L243.7,543.3 Z" fill="#c9b3dc"/><path d="M234.7,555.3 L239.2,560.3 L243.7,555.3 Z" fill="#c9b3dc"/><path d="M1007.4,528.3 L1011.9,523.3 L1016.4,528.3 Z" fill="#c9b3dc"/><path d="M1007.4,540.5 L1011.9,545.5 L1016.4,540.5 Z" fill="#c9b3dc"/><text x="425.5" y="487" text-anchor="middle" font-weight="bold" font-size="9" fill="#fff">?</text><text x="425.5" y="887" text-anchor="middle" font-weight="bold" font-size="9" fill="#fff">?</text><g fill="none" stroke="#c9b3dc" stroke-width="1.3"><rect x="198.7" y="706.8" width="16.8" height="12.6" rx="1.5"/><path d="M202.6,712.6 L205.6,715.6 L211.5,709.5"/><rect x="234.5" y="705.5" width="13" height="14" rx="1"/><path d="M233.5,703.6 H248.5 M238.5,702 H243.5 M238.6,709 V716.5 M243.4,709 V716.5"/></g><path d="M201.3,702.6 H212.5" stroke="#c9b3dc" stroke-width="1.5"/><path d="M242.3,888.8 L236.3,894.8 L242.3,900.8 M248.3,888.8 L242.3,894.8 L248.3,900.8" fill="none" stroke="#5c1e8e" stroke-width="2.8" stroke-linecap="round" stroke-linejoin="miter"/></svg>
<div class="bx" style="left:1px;top:1px;width:1375px;height:918px;border-radius:10px 10px 6px 6px;box-shadow:0 0 0 40px #d6d6d6;"></div>
<div class="bx" style="left:0;top:0;width:1377px;height:920px;border:1px solid #000;"></div>
</body></html>
